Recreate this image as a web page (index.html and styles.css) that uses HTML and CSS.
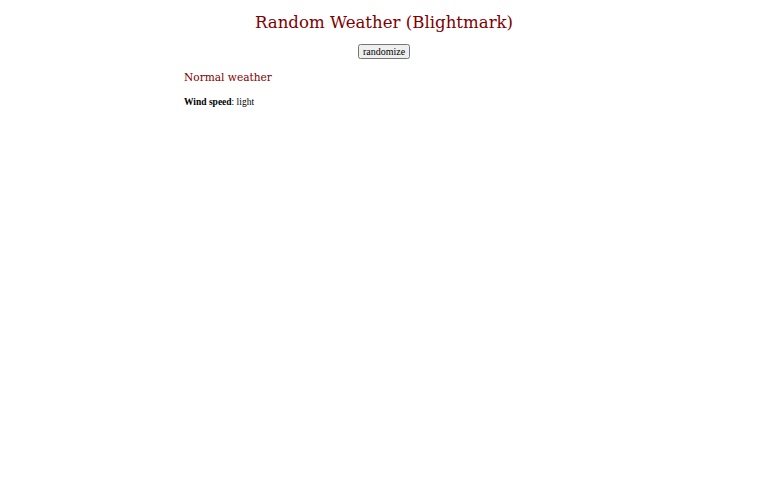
FILE: index.html
```html
<!DOCTYPE html>
<html lang="en">
  <head>
    <meta charset="UTF-8" />
    <meta name="viewport" content="width=device-width, initial-scale=1.0" />
    <title>Random Weather (Blightmark)</title>
    <link rel="stylesheet" href="styles.css">
  </head>
  <body>
    <h1 class="title">Random Weather (Blightmark)</h1>
    <div class="controls">
      <button id="randomize">randomize</button>
    </div>
    <div class="weather">
      <h2 class="kind">Normal weather</h2>
      <p class="detail"><b>Wind speed</b>: light</p>
    </div>
  </body>
</html>
```

FILE: styles.css
```css
* {
  box-sizing: border-box;
  margin: 0;
  padding: 0;
}
body {
  background-color: white;
  color: black;
  font-family: "Liberation Serif", serif;
  font-size: 9.5px;
}
.title {
  margin-top: 12px;
  text-align: center;
  font-family: "DejaVu Serif", serif;
  font-weight: normal;
  font-size: 16.6px;
  line-height: 22px;
  color: #800000;
}
.controls {
  margin-top: 10px;
  text-align: center;
}
#randomize {
  font-family: "Liberation Serif", serif;
  font-size: 10px;
  line-height: 11px;
  padding: 0 3px;
}
.weather {
  width: 400px;
  margin: 0 auto;
}
.kind {
  margin-top: 11px;
  font-family: "DejaVu Serif", serif;
  font-weight: normal;
  font-size: 10.6px;
  line-height: 14px;
  color: #800000;
}
.detail {
  margin-top: 13px;
}
```
